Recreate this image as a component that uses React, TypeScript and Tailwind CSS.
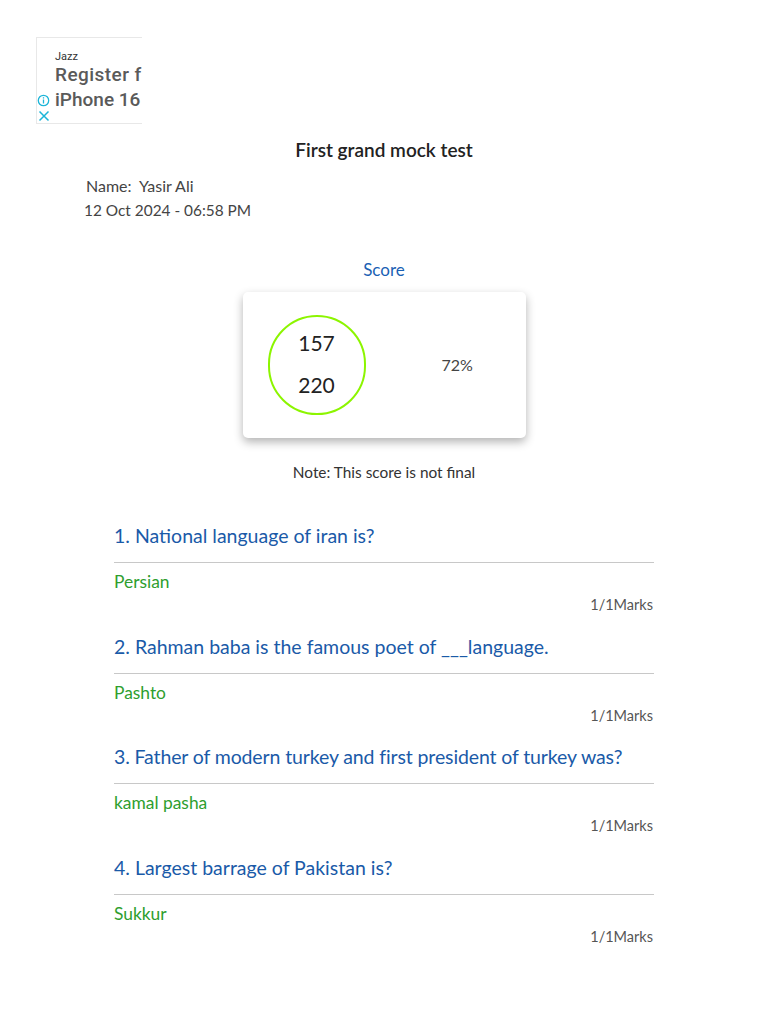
const questions = [
  { q: "1. National language of iran is?", a: "Persian", track: "" },
  { q: "2. Rahman baba is the famous poet of ___language.", a: "Pashto", track: "" },
  { q: "3. Father of modern turkey and first president of turkey was?", a: "kamal pasha", track: "tracking-[-0.12px]" },
  { q: "4. Largest barrage of Pakistan is?", a: "Sukkur", track: "" },
];

export default function App() {
  return (
    <div className="min-h-[1024px] bg-white pt-[37px] font-['Lato','Open_Sans',sans-serif] text-[#333]">
      <div className="ml-[36px] flex h-[87px] w-[106px] flex-col overflow-hidden border-y border-l border-[#e8e8e8] pl-[18px] pt-[12px] relative">
        <div className="text-[11px] leading-[14px] text-[#333] font-['Roboto',sans-serif]">Jazz</div>
        <div className="-mt-[2px] whitespace-nowrap text-[19px] leading-[25px] font-medium tracking-[0.45px] text-[#5a5a5a] font-['Roboto',sans-serif]">Register f</div>
        <div className="whitespace-nowrap text-[19px] leading-[25px] font-medium text-[#5a5a5a] font-['Roboto',sans-serif]">iPhone 16</div>
        <div className="absolute left-[0px] top-[56px] flex flex-col items-center gap-[3px]">
          <svg width="13" height="13" viewBox="0 0 13 13" fill="none" stroke="#1cb5d8" strokeWidth="1.3">
            <circle cx="6.5" cy="6.5" r="5.2" />
            <path d="M6.5 5.6v4M6.5 3.2v1.2" />
          </svg>
          <svg width="12" height="12" viewBox="0 0 12 12" fill="none" stroke="#1cb5d8" strokeWidth="1.5">
            <path d="M1.5 1.5l9 9M10.5 1.5l-9 9" />
          </svg>
        </div>
      </div>

      <h1 className="mt-[13px] text-center text-[19px] leading-[26px] font-semibold text-[#222]">First grand mock test</h1>

      <div className="mt-[11px] pl-[86px] text-[16px] leading-[24px] text-[#444]">Name:&nbsp; Yasir Ali</div>
      <div className="pl-[84px] text-[15.4px] leading-[24px] text-[#444]">12 Oct 2024 - 06:58 PM</div>

      <div className="mt-[36px] text-center text-[17px] leading-[24px] text-[#1a5fb4]">Score</div>

      <div className="mx-auto mt-[10px] flex h-[146px] w-[283px] items-center rounded-[5px] bg-white pl-[25px] shadow-[0_4px_10px_rgba(0,0,0,0.3)]">
        <div className="flex h-[100px] w-[98px] flex-col items-center justify-center gap-[14px] rounded-full border-2 border-[#8cf500] pb-[3px] text-[21px] leading-[28px] text-[#222]">
          <span>157</span>
          <span>220</span>
        </div>
        <div className="ml-[76px] text-[16px] text-[#444]">72%</div>
      </div>

      <div className="mt-[22px] text-center text-[15.4px] leading-[24px] text-[#333]">Note: This score is not final</div>

      <div className="mt-[38px] px-[114px]">
        {questions.map((item) => (
          <div key={item.q} className="h-[110.7px]">
            <div className={`border-b border-[#c8c8c8] pb-[12px] text-[19.5px] leading-[28px] text-[#1a5aa8] ${item.track}`}>{item.q}</div>
            <div className="mt-[7px] text-[17.4px] leading-[24px] text-[#2e9e2e]">{item.a}</div>
            <div className="pr-[1px] text-right text-[14.5px] leading-[22px] text-[#555]">1/1Marks</div>
          </div>
        ))}
      </div>
    </div>
  );
}
